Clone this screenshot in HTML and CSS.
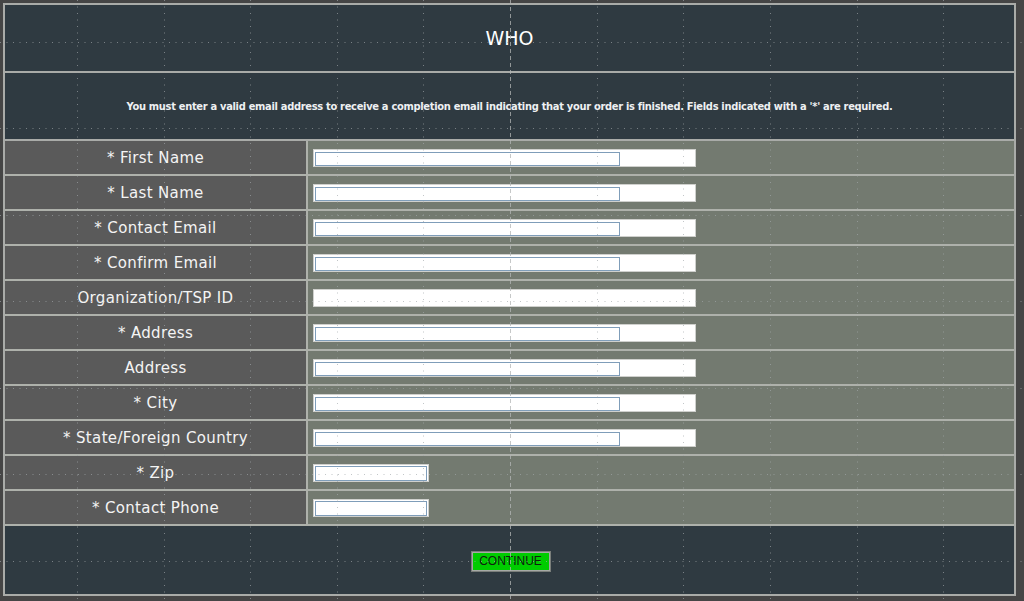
FILE: index.html
```html
<!DOCTYPE html>
<html lang="en">
<head>
<meta charset="utf-8">
<title>WHO</title>
<link rel="stylesheet" href="styles.css">
</head>
<body>
<div class="page">
  <div class="header"><h1 class="title">WHO</h1></div>
  <div class="notice"><p class="notice-text">You must enter a valid email address to receive a completion email indicating that your order is finished. Fields indicated with a '*' are required.</p></div>
  <div class="form">
    <div class="row"><div class="label">* First Name</div><div class="field"><span class="box"><span class="inp"></span></span></div></div>
    <div class="row"><div class="label">* Last Name</div><div class="field"><span class="box"><span class="inp"></span></span></div></div>
    <div class="row"><div class="label">* Contact Email</div><div class="field"><span class="box"><span class="inp"></span></span></div></div>
    <div class="row"><div class="label">* Confirm Email</div><div class="field"><span class="box"><span class="inp"></span></span></div></div>
    <div class="row"><div class="label">Organization/TSP ID</div><div class="field"><span class="box"></span></div></div>
    <div class="row"><div class="label">* Address</div><div class="field"><span class="box"><span class="inp"></span></span></div></div>
    <div class="row"><div class="label">Address</div><div class="field"><span class="box"><span class="inp"></span></span></div></div>
    <div class="row"><div class="label">* City</div><div class="field"><span class="box"><span class="inp"></span></span></div></div>
    <div class="row"><div class="label">* State/Foreign Country</div><div class="field"><span class="box"><span class="inp"></span></span></div></div>
    <div class="row"><div class="label">* Zip</div><div class="field"><span class="box box-small"><span class="inp inp-small"></span></span></div></div>
    <div class="row"><div class="label">* Contact Phone</div><div class="field"><span class="box box-small"><span class="inp inp-small"></span></span></div></div>
  </div>
  <div class="footer"><button class="continue" type="button">CONTINUE</button></div>
</div>
<svg class="guides" width="1024" height="601" viewBox="0 0 1024 601">
  <g class="dots-v">
    <line x1="77.5" y1="0" x2="77.5" y2="601"/>
    <line x1="164.5" y1="0" x2="164.5" y2="601"/>
    <line x1="250.5" y1="0" x2="250.5" y2="601"/>
    <line x1="337.5" y1="0" x2="337.5" y2="601"/>
    <line x1="423.5" y1="0" x2="423.5" y2="601"/>
    <line x1="597.5" y1="0" x2="597.5" y2="601"/>
    <line x1="683.5" y1="0" x2="683.5" y2="601"/>
    <line x1="770.5" y1="0" x2="770.5" y2="601"/>
    <line x1="857.5" y1="0" x2="857.5" y2="601"/>
    <line x1="943.5" y1="0" x2="943.5" y2="601"/>
  </g>
  <g class="dots-h">
    <line x1="0" y1="42.5" x2="1024" y2="42.5"/>
    <line x1="0" y1="128.5" x2="1024" y2="128.5"/>
    <line x1="0" y1="215.5" x2="1024" y2="215.5"/>
    <line x1="0" y1="301.5" x2="1024" y2="301.5"/>
    <line x1="0" y1="388.5" x2="1024" y2="388.5"/>
    <line x1="0" y1="474.5" x2="1024" y2="474.5"/>
    <line x1="0" y1="561.5" x2="1024" y2="561.5"/>
  </g>
  <line class="dash-c" x1="510.5" y1="0" x2="510.5" y2="601"/>
</svg>
</body>
</html>
```

FILE: styles.css
```css
html, body {
  margin: 0;
  padding: 0;
}
body {
  background: #454545;
  width: 1024px;
  height: 601px;
  overflow: hidden;
  position: relative;
  font-family: "DejaVu Sans", Verdana, sans-serif;
}
.page {
  margin: 3px 0 0 3px;
  width: 1009px;
  height: 589px;
  border: 2px solid #a9aba8;
  background: #2f3a41;
  display: flex;
  flex-direction: column;
}
.header {
  height: 66px;
  border-bottom: 2px solid #a9aba8;
  display: flex;
  align-items: center;
  justify-content: center;
}
.title {
  margin: 0;
  color: #ffffff;
  font-weight: normal;
  font-size: 19px;
  padding-bottom: 1px;
}
.notice {
  height: 66px;
  border-bottom: 2px solid #a9aba8;
  display: flex;
  align-items: center;
  justify-content: center;
}
.notice-text {
  margin: 0;
  padding-top: 1px;
  color: #eef0f2;
  font-family: "DejaVu Sans Condensed", "DejaVu Sans", sans-serif;
  font-weight: bold;
  font-size: 11px;
  letter-spacing: -0.3px;
}
.form {
  display: flex;
  flex-direction: column;
}
.row {
  height: 33px;
  border-bottom: 2px solid #aeb1ab;
  display: flex;
}
.label {
  box-sizing: border-box;
  width: 303px;
  background: #5a5a5a;
  border-right: 2px solid #aeb1ab;
  color: #f4f4f4;
  font-size: 15px;
  letter-spacing: 0.35px;
  display: flex;
  align-items: center;
  justify-content: center;
  padding-top: 1px;
}
.field {
  flex: 1;
  background: #737a70;
  display: flex;
  align-items: center;
  padding-left: 5px;
}
.box {
  box-sizing: border-box;
  width: 383px;
  height: 18px;
  background: #ffffff;
  border: 1px solid #cfd0cd;
  padding: 2px 0 0 1px;
  display: flex;
  align-items: flex-start;
}
.inp {
  box-sizing: border-box;
  width: 305px;
  height: 14px;
  border: 1px solid #7f9db9;
  background: #ffffff;
}
.box-small {
  width: 116px;
  height: 18px;
  padding: 1px 0 0 1px;
}
.inp-small {
  width: 112px;
  height: 15px;
}
.footer {
  flex: 1;
  display: flex;
  align-items: center;
  justify-content: center;
  padding-top: 2px;
}
.continue {
  box-sizing: border-box;
  width: 78px;
  height: 19px;
  margin-left: 2px;
  padding: 0;
  background: #00cc00;
  border: 1px solid #a6aaa6;
  outline: 1px solid #7a7e7a;
  color: #102010;
  font-family: "Liberation Sans", Arial, sans-serif;
  font-size: 12px;
  line-height: 17px;
}
.guides {
  position: absolute;
  left: 0;
  top: 0;
  pointer-events: none;
}
.dots-v line,
.dots-h line {
  stroke: #a3a8ab;
  stroke-width: 1;
  stroke-dasharray: 1 5.5;
  opacity: 0.65;
}
.dash-c {
  stroke: #b4b6b6;
  stroke-width: 1;
  stroke-dasharray: 4 3;
  opacity: 0.75;
}
```
